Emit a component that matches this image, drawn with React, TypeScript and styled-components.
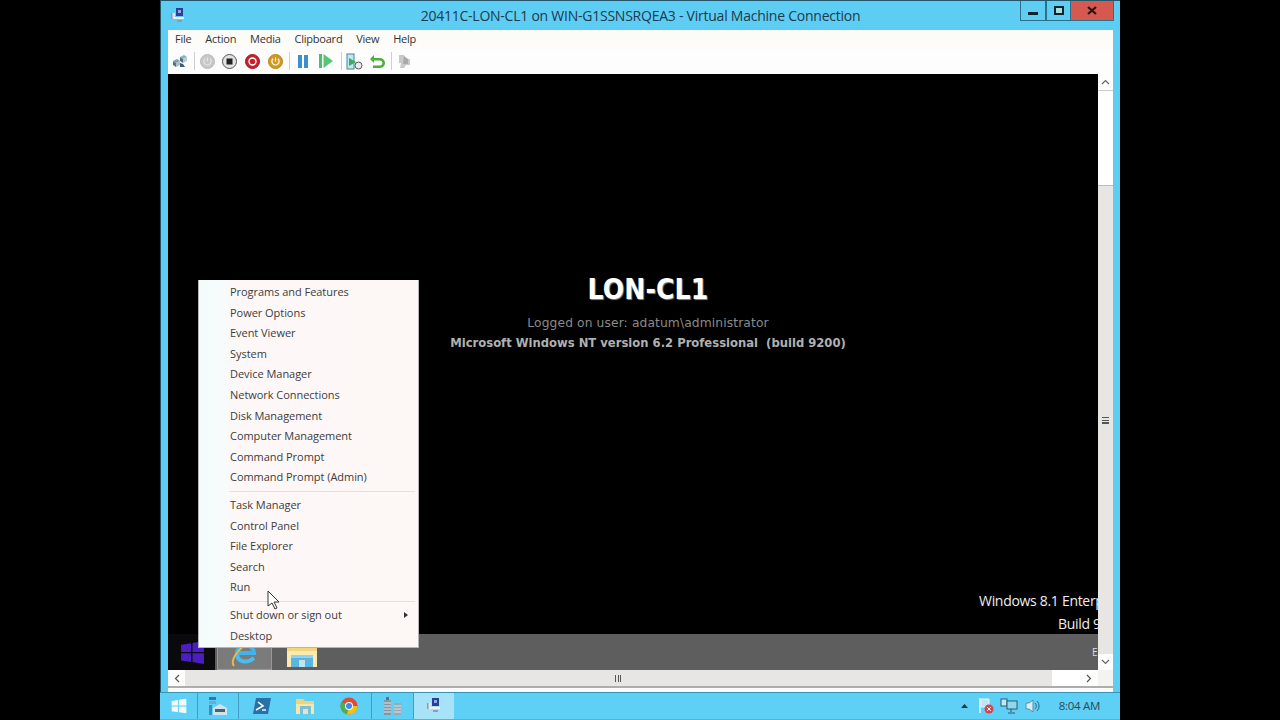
import React from "react";
import styled, { createGlobalStyle } from "styled-components";

const Global = createGlobalStyle`
  html, body { margin: 0; padding: 0; background: #000; }
  #root { width: 1280px; height: 720px; overflow: hidden; }
`;

const Page = styled.div`
  width: 1280px; height: 720px; background: #000;
  display: flex; justify-content: flex-start; padding-left: 160px; box-sizing: border-box;
`;
const Desktop = styled.div`
  width: 960px; height: 720px; display: flex; flex-direction: column; background: #fff;
`;
const VmWindow = styled.div`
  height: 692px; box-sizing: border-box; flex: none;
  background: #5dcdf3; border-top: 1px solid #23566b; border-left: 1px solid #23566b;
  padding: 0 7px 0 7px; display: flex; flex-direction: column; overflow: hidden;
`;
const TitleBar = styled.div`
  height: 29px; flex: none; display: grid; grid-template-columns: 1fr auto 1fr; align-items: start;
  margin: 0 -1px 0 -6px;
`;
const TitleIcon = styled.div` padding: 6px 0 0 7px; height: 18px; `;
const TitleText = styled.div`
  font: 14px/30px "Open Sans", sans-serif; color: #1d3a4c; letter-spacing: -0.24px; white-space: nowrap;
  padding-left: 5px;
`;
const Controls = styled.div` display: flex; justify-content: flex-end; `;
const Ctl = styled.div<{ $w: number; $red?: boolean }>`
  width: ${p => p.$w}px; height: 20px; box-sizing: border-box;
  background: ${p => (p.$red ? "#d6594f" : "#5dcdf3")};
  border: 1px solid #2f6f8a; border-top: none; border-left-width: ${p => (p.$red ? 0 : 1)}px;
  display: flex; align-items: center; justify-content: center;
`;
const MenuBar = styled.div`
  height: 20px; flex: none; display: flex; background: linear-gradient(#fbfbf8, #fdfcf8); box-sizing: border-box;
  padding: 0 0 3px 7px; gap: 13.8px; font: 11px/17px "Open Sans", sans-serif; color: #333; align-items: center;
  letter-spacing: -0.22px;
`;
const ToolBar = styled.div`
  height: 24px; flex: none; background: #fdfdfd; display: flex; align-items: center; padding: 0 0 2px 4px; box-sizing: border-box;
`;
const ToolSep = styled.div<{ $l: number; $r: number }>`
  width: 1px; height: 18px; background: #cfcfcf; margin: 0 ${p => p.$r}px 0 ${p => p.$l}px; flex: none;
`;
const ToolSlot = styled.div<{ $w?: number }>`
  width: ${p => p.$w ?? 22.6}px; height: 20px; display: flex; align-items: center; justify-content: center; flex: none;
`;
const ContentRow = styled.div` display: flex; height: 596px; flex: none; `;
const Screen = styled.div`
  width: 930px; height: 596px; background: #000; position: relative; overflow: hidden;
  display: flex; flex-direction: column;
`;
const Greeting = styled.div`
  flex: 1; display: flex; flex-direction: column; align-items: center; padding-top: 200px;
  font-family: "DejaVu Sans", sans-serif; padding-left: 30px;
`;
const Host = styled.div`
  font: bold 28px/32px "DejaVu Sans Condensed", "DejaVu Sans", sans-serif; color: #fff;
  text-shadow: 1px 1px 1px #888; letter-spacing: 0.1px;
`;
const Logged = styled.div` font-size: 12.3px; line-height: 20px; color: #8a8a8a; margin-top: 7px; letter-spacing: 0.1px; `;
const Version = styled.div` font-size: 11.6px; font-weight: bold; line-height: 20px; color: #b0b0b0; white-space: nowrap; `;
const Watermark = styled.div`
  position: absolute; left: 811px; top: 515px; width: 200px; text-align: left;
  font: 14px/23px "Open Sans", sans-serif; color: #eee; white-space: nowrap; letter-spacing: -0.3px;
`;
const Build = styled.div` padding-left: 79px; `;
const GuestBar = styled.div`
  height: 36px; flex: none; background: #5e5e5e; display: flex; align-items: stretch; position: relative;
`;
const GuestStart = styled.div`
  width: 47px; background: #0a0a0c; display: flex; align-items: center; justify-content: center;
  padding-left: 2px; box-sizing: border-box;
`;
const GuestIE = styled.div`
  width: 55px; margin-left: 2px; background: #7b7b7b; border: 1px solid #999; box-sizing: border-box;
  display: flex; align-items: flex-end; justify-content: center; overflow: hidden; padding-bottom: 2px;
`;
const GuestFolder = styled.div`
  width: 60px; display: flex; justify-content: center; align-items: flex-end; padding-bottom: 3px;
`;
const GuestSpacer = styled.div` flex: 1; display: flex; justify-content: flex-end; `;
const GuestClip = styled.div` font: 10px/37px "Open Sans", sans-serif; color: #ddd; width: 6px; overflow: hidden; `;
const PopMenu = styled.div`
  position: absolute; left: 30px; top: 206px; width: 221px; height: 368px; box-sizing: border-box;
  background: linear-gradient(90deg, #f5fbfb 0, #f8fbfb 29px, #fdf8f8 30px, #fdf7f6 100%);
  border: 1px solid #b5b5b5; border-width: 0 1px 1px 1px; padding-top: 2px; z-index: 2;
  font: 11px/20.6px "Open Sans", sans-serif; color: #3c3c3c;
`;
const PopItem = styled.div`
  height: 20.6px; padding-left: 31px; position: relative; white-space: nowrap; letter-spacing: -0.04px;
`;
const PopSep = styled.div` height: 1px; margin: 3.4px 3px 2.7px 30px; background: #e3e0e0; `;
const Arrow = styled.span`
  position: absolute; right: 10px; top: 7px; width: 0; height: 0;
  border-left: 4px solid #333; border-top: 3px solid transparent; border-bottom: 3px solid transparent;
`;
const Pointer = styled.div` position: absolute; left: 99px; top: 516px; z-index: 3; width: 13px; height: 20px; `;
const VScroll = styled.div`
  width: 15px; flex: none; background: #fff; display: flex; flex-direction: column;
  border-left: 1px solid #aaa; box-sizing: content-box; margin-left: -1px;
`;
const SBtn = styled.div<{ $h?: number }>`
  height: ${p => p.$h ?? 16}px; flex: none; background: #fdfdfd; display: flex; align-items: center; justify-content: center;
`;
const VTrack = styled.div` height: 96px; background: #fff; border-bottom: 1px solid #bbb; border-top: 1px solid #ccc; box-sizing: border-box; flex: none; `;
const VThumb = styled.div`
  flex: 1; background: #e7e6e5; display: flex; align-items: center; justify-content: center;
`;
const HScroll = styled.div`
  height: 18px; flex: none; display: flex; background: #fff; border-bottom: 2px solid #aeadaa; box-sizing: border-box;
`;
const HBtn = styled.div<{ $w: number }>`
  width: ${p => p.$w}px; flex: none; background: #fdfdfd; display: flex; align-items: center; justify-content: center;
`;
const HThumb = styled.div`
  width: 867px; flex: none; background: #e7e6e4; display: flex; align-items: center; justify-content: center;
`;
const HSpace = styled.div` width: 28px; flex: none; background: #fff; `;
const HCorner = styled.div` width: 15px; flex: none; background: #f3f3f1; `;
const StatusStrip = styled.div` height: 4px; flex: none; background: #fbfbfb; `;
const Grip = styled.div<{ $v?: boolean }>`
  width: 7px; height: 7px;
  background: repeating-linear-gradient(${p => (p.$v ? "180deg" : "90deg")}, #555 0 1.3px, #e7e6e5 1.3px 2.6px);
`;
const TaskBar = styled.div`
  height: 28px; flex: none; background: #5ecff5; border-top: 1px solid #3a93b3; border-bottom: 1px solid #4ab7dc;
  box-sizing: border-box; display: flex; align-items: center;
`;
const TaskCell = styled.div<{ $w: number; $active?: boolean; $line?: boolean }>`
  width: ${p => p.$w}px; height: 100%; flex: none; box-sizing: border-box;
  display: flex; align-items: center; justify-content: center;
  background: ${p => (p.$active ? "#a6e3f8" : "transparent")};
  border-right: ${p => (p.$line ? "1px solid #3e9fc0" : "none")};
`;
const Tray = styled.div`
  flex: 1; display: flex; align-items: center; justify-content: flex-end; padding-right: 20px; height: 100%;
`;
const TrayIcon = styled.div<{ $w: number }>`
  width: ${p => p.$w}px; display: flex; justify-content: center; align-items: center;
`;
const Clock = styled.div`
  font: 11.5px/26px "Open Sans", sans-serif; color: #2b4a5c; margin-left: 15px; white-space: nowrap; letter-spacing: -0.3px;
`;

const Vm = () => (
  <svg width="18" height="18" viewBox="0 0 18 18">
    <rect x="2" y="6" width="4" height="6" fill="#dfe6ec" />
    <rect x="2" y="6" width="1.500" height="6" fill="#8d9aa5" />
    <rect x="7" y="1" width="7" height="8" fill="#2a3f95" />
    <rect x="9" y="3" width="3" height="3" fill="#8fa8df" />
    <rect x="5" y="10" width="10" height="2" fill="#eaf0f2" />
    <rect x="8" y="13" width="5" height="2" fill="#8da0a9" />
  </svg>
);
const Round = ({ c, b, children }: { c: string; b: string; children?: React.ReactNode }) => (
  <svg width="15" height="15" viewBox="0 0 15 15">
    <circle cx="7.5" cy="7.5" r="7" fill={c} stroke={b} />
    {children}
  </svg>
);
const Power = ({ s }: { s: string }) => (
  <g fill="none" stroke={s} strokeWidth="1.2">
    <path d="M5 4.8a3.6 3.6 0 1 0 5 0" />
    <path d="M7.5 3.5v4" />
  </g>
);
const Cubes = () => (
  <svg width="16" height="14" viewBox="0 0 16 14">
    <path d="M1 7l4-2 3 2-4 2z" fill="#7f9fb0" />
    <path d="M1 7v4l3 2V9z" fill="#4e7488" /><path d="M4 9v4l4-2V7z" fill="#a5bfcc" />
    <path d="M8 3l4-2 3 2-4 2z" fill="#8db0c1" />
    <path d="M8 3v4l3 2V5z" fill="#4e7488" /><path d="M11 5v4l4-2V3z" fill="#b4ccd6" />
    <path d="M8 9l3 1 2 3H8z" fill="#3f5f70" />
  </svg>
);
const WinLogo = ({ c, s }: { c: string; s: number }) => (
  <svg width={s} height={s} viewBox="0 0 24 24">
    <path d="M1 4.5L10.6 3v8.4H1z" fill={c} />
    <path d="M12 2.8L23 1v10.4H12z" fill={c} />
    <path d="M1 12.8h9.6v8.4L1 19.7z" fill={c} />
    <path d="M12 12.8h11V23l-11-1.8z" fill={c} />
  </svg>
);
const Ie = () => (
  <svg width="30" height="28" viewBox="0 0 30 28">
    <path d="M7 15a8.500 8.500 0 0 1 17-1H8" fill="none" stroke="#3fb4e8" strokeWidth="4" />
    <path d="M7 15c0 8 10 10 17 4" fill="none" stroke="#47bdf0" strokeWidth="4" />
    <path d="M4 27C0 22 8 7 22 4" fill="none" stroke="#e9b84a" strokeWidth="2" />
  </svg>
);
const GFolder = () => (
  <svg width="30" height="24" viewBox="0 0 30 24">
    <rect x="0" y="0" width="30" height="24" fill="#f2d67b" />
    <rect x="0" y="8" width="30" height="16" fill="#fbeab0" />
    <rect x="4" y="12" width="22" height="12" fill="#5ab5e0" />
    <rect x="4" y="12" width="22" height="3" fill="#8fd3f0" />
    <rect x="12" y="17" width="6" height="7" fill="#bfe3ef" />
  </svg>
);
const Cursor = () => (
  <svg width="13" height="20" viewBox="0 0 13 20">
    <path d="M1 1v15l4-3 3 6 2-1-3-6h5z" fill="#fff" stroke="#333" strokeWidth="1" />
  </svg>
);
const ServerMgr = () => (
  <svg width="20" height="20" viewBox="0 0 20 20">
    <rect x="1" y="1" width="7" height="3" fill="#2d78b0" /><rect x="1" y="5" width="7" height="3" fill="#6fa9cf" />
    <rect x="1" y="9" width="3" height="10" fill="#3a8dc0" />
    <path d="M5 12l7-4 7 4v7H5z" fill="#cfe3ec" /><rect x="7" y="13" width="10" height="3" fill="#49606e" />
  </svg>
);
const PowerShell = () => (
  <svg width="20" height="18" viewBox="0 0 20 18">
    <path d="M4 1h15l-3 16H1z" fill="#2a70a8" />
    <path d="M6 5l5 4-7 4" fill="none" stroke="#fff" strokeWidth="1.6" /><path d="M10 13h4" stroke="#fff" strokeWidth="1.4" />
  </svg>
);
const Folder = () => (
  <svg width="20" height="18" viewBox="0 0 20 18">
    <path d="M1 2h7l2 2h9v13H1z" fill="#efd27e" /><rect x="1" y="7" width="18" height="10" fill="#f8e7ad" />
    <rect x="5" y="9" width="11" height="8" fill="#7cc0d8" /><rect x="8" y="12" width="5" height="5" fill="#e9e3c4" />
  </svg>
);
const Chrome = () => (
  <svg width="18" height="18" viewBox="0 0 18 18">
    <circle cx="9" cy="9" r="8.5" fill="#dd4b39" />
    <path d="M9 9L1.6 4.8A8.5 8.5 0 0 0 7 17.3z" fill="#4caf50" />
    <path d="M9 9h8.5A8.5 8.5 0 0 1 7 17.3z" fill="#f4c20d" />
    <circle cx="9" cy="9" r="4" fill="#fff" /><circle cx="9" cy="9" r="3" fill="#4285f4" />
  </svg>
);
const Tools = () => (
  <svg width="20" height="20" viewBox="0 0 20 20">
    <rect x="1" y="4" width="7" height="15" fill="#7f9aa6" /><rect x="11" y="7" width="7" height="12" fill="#93acb6" />
    <path d="M1 7h7M1 10h7M1 13h7M1 16h7M11 10h7M11 13h7M11 16h7" stroke="#d8e6ea" strokeWidth="1" />
    <rect x="3" y="1" width="3" height="3" fill="#547585" />
  </svg>
);

const topItems = ["Programs and Features", "Power Options", "Event Viewer", "System", "Device Manager", "Network Connections", "Disk Management", "Computer Management", "Command Prompt", "Command Prompt (Admin)"];
const midItems = ["Task Manager", "Control Panel", "File Explorer", "Search", "Run"];

export default function App() {
  return (
    <Page>
      <Global />
      <Desktop>
        <VmWindow>
          <TitleBar>
            <TitleIcon><Vm /></TitleIcon>
            <TitleText>20411C-LON-CL1 on WIN-G1SSNSRQEA3 - Virtual Machine Connection</TitleText>
            <Controls>
              <Ctl $w={26}><svg width="10" height="10" viewBox="0 0 10 10"><rect y="6" width="10" height="3" fill="#12222c" /></svg></Ctl>
              <Ctl $w={25}><svg width="10" height="9" viewBox="0 0 10 9"><rect x="1" y="1" width="8" height="7" fill="#a6dfe0" stroke="#12222c" strokeWidth="2" /></svg></Ctl>
              <Ctl $w={43} $red><svg width="10" height="9" viewBox="0 0 10 9"><path d="M1 1l8 7M9 1L1 8" stroke="#2a1412" strokeWidth="2.2" /></svg></Ctl>
            </Controls>
          </TitleBar>
          <MenuBar>
            <span>File</span><span>Action</span><span>Media</span><span>Clipboard</span><span>View</span><span>Help</span>
          </MenuBar>
          <ToolBar>
            <ToolSlot $w={16}><Cubes /></ToolSlot>
            <ToolSep $l={6} $r={1} />
            <ToolSlot><Round c="#c7c7c7" b="#bbb"><Power s="#e6e6e6" /></Round></ToolSlot>
            <ToolSlot><Round c="#e3e3e3" b="#555"><rect x="4.5" y="4.5" width="6" height="6" fill="#222" /></Round></ToolSlot>
            <ToolSlot><Round c="#c8202e" b="#a5141f"><circle cx="7.5" cy="7.5" r="3.5" fill="none" stroke="#fff" strokeWidth="1.4" /></Round></ToolSlot>
            <ToolSlot><Round c="#d29a1c" b="#b9841a"><Power s="#fff" /></Round></ToolSlot>
            <ToolSep $l={3} $r={1.7} />
            <ToolSlot><svg width="12" height="13" viewBox="0 0 12 13"><rect x="1" width="4" height="13" fill="#3b8ed0" /><rect x="7" width="4" height="13" fill="#3b8ed0" /></svg></ToolSlot>
            <ToolSlot><svg width="14" height="14" viewBox="0 0 14 14"><rect x="0" width="3" height="14" fill="#49c06a" /><path d="M4.500 0L14 7l-9.500 7z" fill="#55c878" /></svg></ToolSlot>
            <ToolSep $l={3.5} $r={1} />
            <ToolSlot><svg width="17" height="17" viewBox="0 0 17 17"><rect x="1" y="1" width="7" height="15" fill="#c7e6ee" stroke="#3b87a8" /><path d="M3 5l7 4-7 4z" fill="#3cae5a" /><circle cx="12.500" cy="12.500" r="3.500" fill="#eee" stroke="#555" /></svg></ToolSlot>
            <ToolSlot><svg width="16" height="15" viewBox="0 0 16 15"><path d="M5 1L1 5l4 4V6.500h6a2.500 2.500 0 0 1 0 5H4V14h7a5 5 0 0 0 0-10H5z" fill="#4fae3e" /></svg></ToolSlot>
            <ToolSep $l={3} $r={1} />
            <ToolSlot><svg width="15" height="16" viewBox="0 0 15 16"><path d="M2 2h5l2 4h4v6H9l-2 3H3l1-5H2z" fill="#c9c9c9" /><path d="M7 3l4 3v5H6z" fill="#a9a9a9" /></svg></ToolSlot>
          </ToolBar>
          <ContentRow>
            <Screen>
              <Greeting>
                <Host>LON-CL1</Host>
                <Logged>Logged on user: adatum\administrator</Logged>
                <Version>Microsoft Windows NT version 6.2 Professional&nbsp; (build 9200)</Version>
              </Greeting>
              <Watermark>Windows 8.1 Enterprise<Build>Build 9600</Build></Watermark>
              <GuestBar>
                <GuestStart><WinLogo c="#4a1ec0" s={25} /></GuestStart>
                <GuestIE><Ie /></GuestIE>
                <GuestFolder><GFolder /></GuestFolder>
                <GuestSpacer><GuestClip>E</GuestClip></GuestSpacer>
              </GuestBar>
              <PopMenu>
                {topItems.map(t => <PopItem key={t}>{t}</PopItem>)}
                <PopSep />
                {midItems.map(t => <PopItem key={t}>{t}</PopItem>)}
                <PopSep />
                <PopItem>Shut down or sign out<Arrow /></PopItem>
                <PopItem>Desktop</PopItem>
              </PopMenu>
              <Pointer><Cursor /></Pointer>
            </Screen>
            <VScroll>
              <SBtn><svg width="9" height="6" viewBox="0 0 9 6"><path d="M1 5l3.500-3.500L8 5" fill="none" stroke="#666" strokeWidth="1.2" /></svg></SBtn>
              <VTrack />
              <VThumb><Grip $v /></VThumb>
              <SBtn><svg width="9" height="6" viewBox="0 0 9 6"><path d="M1 1l3.500 3.500L8 1" fill="none" stroke="#666" strokeWidth="1.2" /></svg></SBtn>
            </VScroll>
          </ContentRow>
          <HScroll>
            <HBtn $w={17}><svg width="6" height="9" viewBox="0 0 6 9"><path d="M5 1L1.500 4.500 5 8" fill="none" stroke="#555" strokeWidth="1.2" /></svg></HBtn>
            <HThumb><Grip /></HThumb>
            <HSpace />
            <HBtn $w={18}><svg width="6" height="9" viewBox="0 0 6 9"><path d="M1 1l3.500 3.500L1 8" fill="none" stroke="#555" strokeWidth="1.2" /></svg></HBtn>
            <HCorner />
          </HScroll>
          <StatusStrip />
        </VmWindow>
        <TaskBar>
          <TaskCell $w={38} $line><WinLogo c="#f2fafd" s={16} /></TaskCell>
          <TaskCell $w={41} $line><ServerMgr /></TaskCell>
          <TaskCell $w={45}><PowerShell /></TaskCell>
          <TaskCell $w={42}><Folder /></TaskCell>
          <TaskCell $w={46} $line><Chrome /></TaskCell>
          <TaskCell $w={42} $line><Tools /></TaskCell>
          <TaskCell $w={40} $active><Vm /></TaskCell>
          <Tray>
            <TrayIcon $w={21}><svg width="7" height="4" viewBox="0 0 7 4"><path d="M0 4l3.500-4L7 4z" fill="#15384a" /></svg></TrayIcon>
            <TrayIcon $w={23}><svg width="17" height="18" viewBox="0 0 17 18"><path d="M2 1v15" stroke="#e8f4f8" strokeWidth="1.5" /><path d="M3 2h8v8H3z" fill="#bde5f3" stroke="#e8f4f8" /><circle cx="11" cy="12" r="4.500" fill="#d9414e" /><path d="M9 10l4 4M13 10l-4 4" stroke="#fff" /></svg></TrayIcon>
            <TrayIcon $w={23}><svg width="18" height="16" viewBox="0 0 18 16"><rect x="1" y="1" width="6" height="7" fill="#bfeaf5" stroke="#2b5d70" /><rect x="7" y="3" width="10" height="8" fill="#8fd8ee" stroke="#2b5d70" /><path d="M11 11v3M8 15h7" stroke="#2b5d70" /></svg></TrayIcon>
            <TrayIcon $w={23}><svg width="16" height="16" viewBox="0 0 16 16"><path d="M2 5h3l4-3v12l-4-3H2z" fill="#d7eef6" stroke="#5a8ea3" /><path d="M11 5a4 4 0 0 1 0 6M13 3a7 7 0 0 1 0 10" fill="none" stroke="#2b6d88" /></svg></TrayIcon>
            <Clock>8:04 AM</Clock>
          </Tray>
        </TaskBar>
      </Desktop>
    </Page>
  );
}
